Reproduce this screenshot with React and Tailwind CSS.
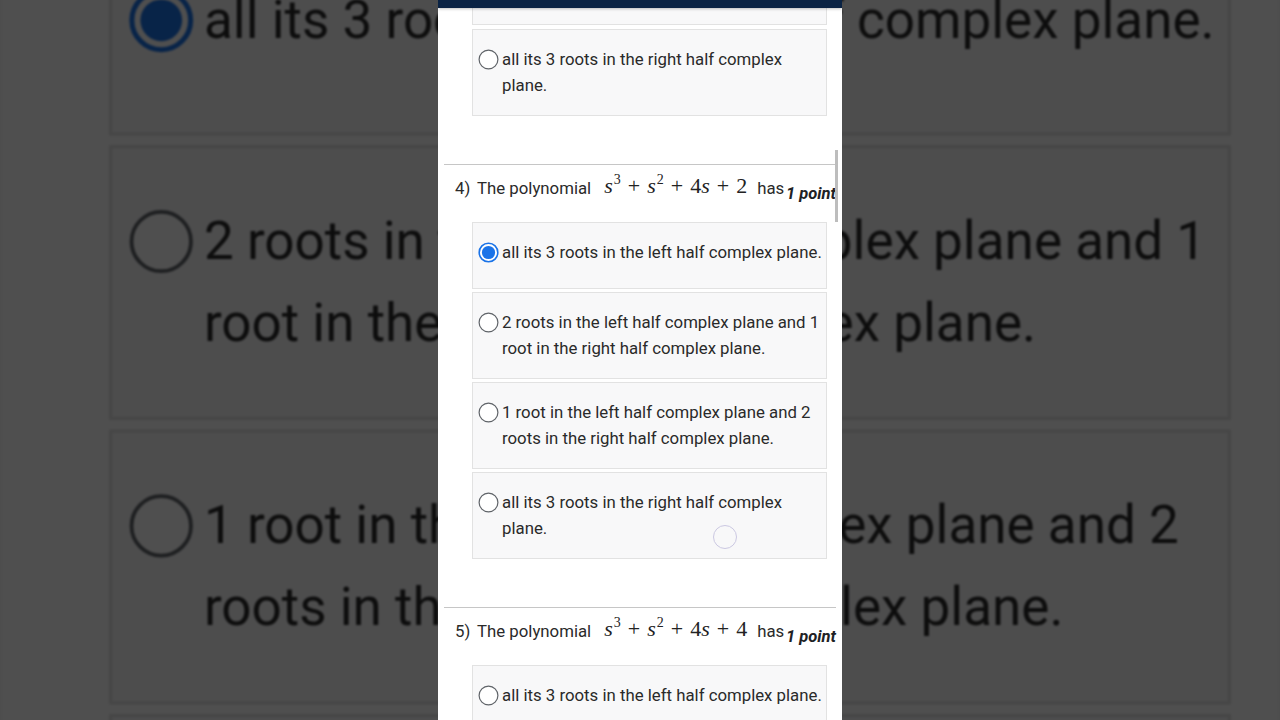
import React from 'react';

const q4Options = [
  { text: 'all its 3 roots in the left half complex plane.', checked: true },
  { text: '2 roots in the left half complex plane and 1 root in the right half complex plane.' },
  { text: '1 root in the left half complex plane and 2 roots in the right half complex plane.' },
  { text: 'all its 3 roots in the right half complex plane.' },
];

function Radio({ checked }) {
  return (
    <svg width="21" height="21" viewBox="0 0 21 21">
      {checked ? (
        <>
          <circle cx="10.5" cy="10.5" r="9.3" fill="#fff" stroke="#1a73e8" strokeWidth="1.6" />
          <circle cx="10.5" cy="10.5" r="6.6" fill="#1a73e8" />
        </>
      ) : (
        <circle cx="10.5" cy="10.5" r="9.4" fill="#fff" stroke="#5f6368" strokeWidth="1.2" />
      )}
    </svg>
  );
}

function Option({ text, checked, className = '' }) {
  return (
    <div className={`flex items-start border border-[#e2e2e2] bg-[#f8f8f9] pl-[5px] pt-[16px] pb-[17px] min-h-[67px] ${className}`}>
      <div className="h-[26px] w-[21px] flex items-center shrink-0">
        <Radio checked={checked} />
      </div>
      <div className="ml-[3px] w-[324px] text-[16.8px] leading-[26px] text-[#2a2a2a]">{text}</div>
    </div>
  );
}

function Poly({ last }) {
  const sup = 'relative -top-[9px] text-[14px] ml-[1px]';
  const op = 'mx-[7px]';
  return (
    <span className="font-['Liberation_Serif',serif] text-[22px] text-[#222] whitespace-nowrap">
      <i>s</i><span className={sup}>3</span>
      <span className={op}>+</span>
      <i>s</i><span className={sup}>2</span>
      <span className={op}>+</span>
      4<i>s</i>
      <span className={op}>+</span>
      {last}
    </span>
  );
}

function Question({ num, last }) {
  return (
    <div className="mt-[9px] flex justify-between items-start pl-[17px] pr-[6px] text-[16.8px] text-[#2a2a2a] whitespace-nowrap">
      <div className="flex items-center leading-[24px]">
        <span className="w-[22px]">{num})</span>
        <span>The polynomial</span>
        <span className="ml-[13px]"><Poly last={last} /></span>
        <span className="ml-[10px]">has</span>
      </div>
      <span className="pt-[8px] leading-[24px] text-[16.5px] font-bold italic text-[#202124]">1 point</span>
    </div>
  );
}

function Screen() {
  return (
    <div className="relative w-[404px] h-[720px] bg-white overflow-hidden font-['Roboto','Noto_Sans',sans-serif] shrink-0">
      <div className="relative z-10 h-[8px] bg-[#0b2344] shadow-[0_1px_3px_rgba(0,0,0,0.25)]" />
      <div className="pl-[34px] pr-[15px]">
        <div className="h-[17px] border-x border-b border-[#e2e2e2] bg-[#f8f8f9]" />
        <Option className="mt-[4px]" text="all its 3 roots in the right half complex plane." />
      </div>
      <div className="mt-[48px] mx-[6px] h-px bg-[#c6c6c6]" />
      <Question num="4" last="2" />
      <div className="mt-[16px] pl-[34px] pr-[15px] flex flex-col gap-[3px]">
        {q4Options.map((o, i) => (
          <Option key={i} text={o.text} checked={o.checked} />
        ))}
      </div>
      <div className="mt-[48px] mx-[6px] h-px bg-[#c6c6c6]" />
      <Question num="5" last="4" />
      <div className="mt-[16px] pl-[34px] pr-[15px]">
        <Option text="all its 3 roots in the left half complex plane." />
      </div>

      {/* scroll thumb and touch ripple */}
      <div className="absolute right-[4px] top-[150px] w-[3px] h-[72px] bg-[#bdbdbd]" />
      <div className="absolute left-[275px] top-[525px] w-[24px] h-[24px] rounded-full border-[1.5px] border-[#cbc8e2]" />
    </div>
  );
}

export default function App() {
  return (
    <div className="relative w-[1280px] h-[720px] overflow-hidden bg-[#4d4d4d]">
      <div className="absolute inset-0 flex justify-center">
        <div className="scale-[3.16] brightness-[0.31] blur-[0.3px]">
          <Screen />
        </div>
      </div>
      <div className="relative flex justify-center">
        <Screen />
      </div>
    </div>
  );
}
